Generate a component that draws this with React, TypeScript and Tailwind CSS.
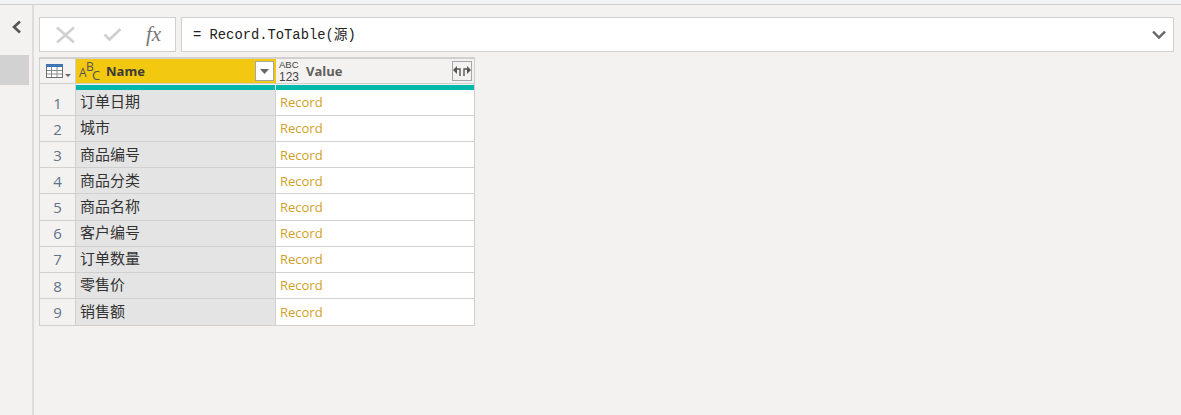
const rows = ["订单日期", "城市", "商品编号", "商品分类", "商品名称", "客户编号", "订单数量", "零售价", "销售额"];

const sans = "font-['Open_Sans','Noto_Sans_CJK_SC',sans-serif]";

function TableIcon() {
  return (
    <svg width="26" height="16" viewBox="0 0 26 16">
      <rect x="0.5" y="1.5" width="16" height="13" fill="#fff" stroke="#6e6e6e" />
      <rect x="0" y="1" width="17" height="3" fill="#3f74b5" />
      <path d="M1 7.5h15M1 11h15M5.5 4v10M11 4v10" stroke="#8a8a8a" fill="none" />
      <path d="M19 11h6l-3 3z" fill="#666" />
    </svg>
  );
}

function ExpandIcon() {
  return (
    <svg width="18" height="12" viewBox="0 0 18 12">
      <path d="M0 5l4-4v8z M18 5l-4-4v8z" fill="#555" />
      <path d="M4 4h3v7M14 4h-3v7" stroke="#555" strokeWidth="1.4" fill="none" />
    </svg>
  );
}

export default function App() {
  return (
    <div className={`w-[1181px] h-[415px] overflow-hidden bg-[#f3f2f1] flex flex-col ${sans}`}>
      <div className="h-[5px] shrink-0 bg-[#f1f3f5] border-b border-[#d2d0ce]" />
      <div className="flex flex-1 min-h-0">
        {/* left collapsed queries pane */}
        <div className="w-[34px] shrink-0 border-r-2 border-[#dedcda] flex flex-col">
          <div className="h-[50px] pl-[11px] pt-[15px]">
            <svg width="11" height="14" viewBox="0 0 11 14">
              <path d="M9 1.5L3 7l6 5.5" stroke="#555" strokeWidth="2.6" fill="none" />
            </svg>
          </div>
          <div className="w-[29px] h-[30px] bg-[#d2d2d2]" />
        </div>

        <div className="flex-1 min-w-0 pl-[5px] pr-[7px] pt-[12px]">
          {/* formula bar */}
          <div className="flex gap-[5px] h-[35px]">
            <div className="w-[137px] bg-white border border-[#d2d0ce] flex items-center pl-[15px]">
              <svg width="21" height="18" viewBox="0 0 21 18">
                <path d="M2 1.5l17 15M19 1.5l-17 15" stroke="#d0d0d0" strokeWidth="2.6" fill="none" />
              </svg>
              <svg className="ml-[27px]" width="19" height="13" viewBox="0 0 19 13">
                <path d="M1.5 6.5l5 5L17.5 1" stroke="#d0d0d0" strokeWidth="2.8" fill="none" />
              </svg>
              <span className="ml-[24px] font-['Liberation_Serif',serif] italic text-[21px] leading-none text-[#777]">fx</span>
            </div>
            <div className="flex-1 bg-white border border-[#d2d0ce] flex items-center justify-between pl-[11px] pr-[7px]">
              <span className="font-['Liberation_Mono','Noto_Sans_CJK_SC',monospace] text-[13.8px] text-[#222] pt-[3px]">= Record.ToTable(源)</span>
              <svg width="14" height="10" viewBox="0 0 14 10">
                <path d="M1 1.5l6 6 6-6" stroke="#666" strokeWidth="2.4" fill="none" />
              </svg>
            </div>
          </div>

          {/* table */}
          <div className="mt-[5px] w-[436px] border border-[#d2d0ce] border-t-2 bg-white">
            <div className="grid grid-cols-[36px_200px_198px] h-[25px] bg-[#f3f2f1] border-b border-[#d2d0ce]">
              <div className="border-r border-[#d2d0ce] flex items-center pl-[6px]">
                <TableIcon />
              </div>
              <div className="bg-[#f2c811] flex items-center pl-[3px] pr-[2px]">
                <span className="relative w-[22px] h-[22px] text-[#555] leading-none">
                  <span className="absolute left-0 top-[7px] text-[12px]">A</span>
                  <span className="absolute left-[7px] top-[1px] text-[12px]">B</span>
                  <span className="absolute left-[13px] top-[9px] text-[13px]">C</span>
                </span>
                <span className="ml-[5px] pt-[2px] text-[13px] font-bold text-[#3b3a39]">Name</span>
                <span className="ml-auto w-[19px] h-[20px] bg-white border border-[#a6a6a6] flex items-center justify-center">
                  <svg width="9" height="5" viewBox="0 0 9 5"><path d="M0 0h9L4.5 5z" fill="#666" /></svg>
                </span>
              </div>
              <div className="flex items-center pl-[3px] pr-[2px]">
                <span className="w-[22px] text-[#444] font-['Liberation_Sans',sans-serif]">
                  <span className="block text-[9.5px] leading-[11.5px]">ABC</span>
                  <span className="block text-[12px] leading-[12.5px]">123</span>
                </span>
                <span className="ml-[5px] pt-[2px] text-[13px] font-bold text-[#605e5c]">Value</span>
                <span className="ml-auto w-[20px] h-[20px] bg-[#f3f2f1] border border-[#a6a6b0] flex items-center justify-center">
                  <ExpandIcon />
                </span>
              </div>
            </div>
            <div className="grid grid-cols-[36px_200px_198px] h-[6px] bg-[#f3f2f1]">
              <div className="border-r border-[#d2d0ce]" />
              <div className="bg-[#01b8aa] mt-[1px] border-r border-white" />
              <div className="bg-[#01b8aa] mt-[1px]" />
            </div>
            {rows.map((name, i) => (
              <div key={name} className={`grid grid-cols-[36px_200px_198px] h-[26.12px] ${i < 8 ? "border-b border-[#d2d0ce]" : ""}`}>
                <div className="bg-[#f3f2f1] border-r border-[#d2d0ce] pt-[1px] flex items-center justify-center text-[15px] text-[#5f7388]">
                  {i + 1}
                </div>
                <div className="bg-[#e4e4e4] border-r border-[#d2d0ce] pl-[4px] flex items-center text-[15px] text-[#333] pb-[2px]">
                  {name}
                </div>
                <div className="flex items-center pl-[4px] pt-[1px] text-[13px] text-[#d19f26]">Record</div>
              </div>
            ))}
          </div>
        </div>
      </div>
    </div>
  );
}
